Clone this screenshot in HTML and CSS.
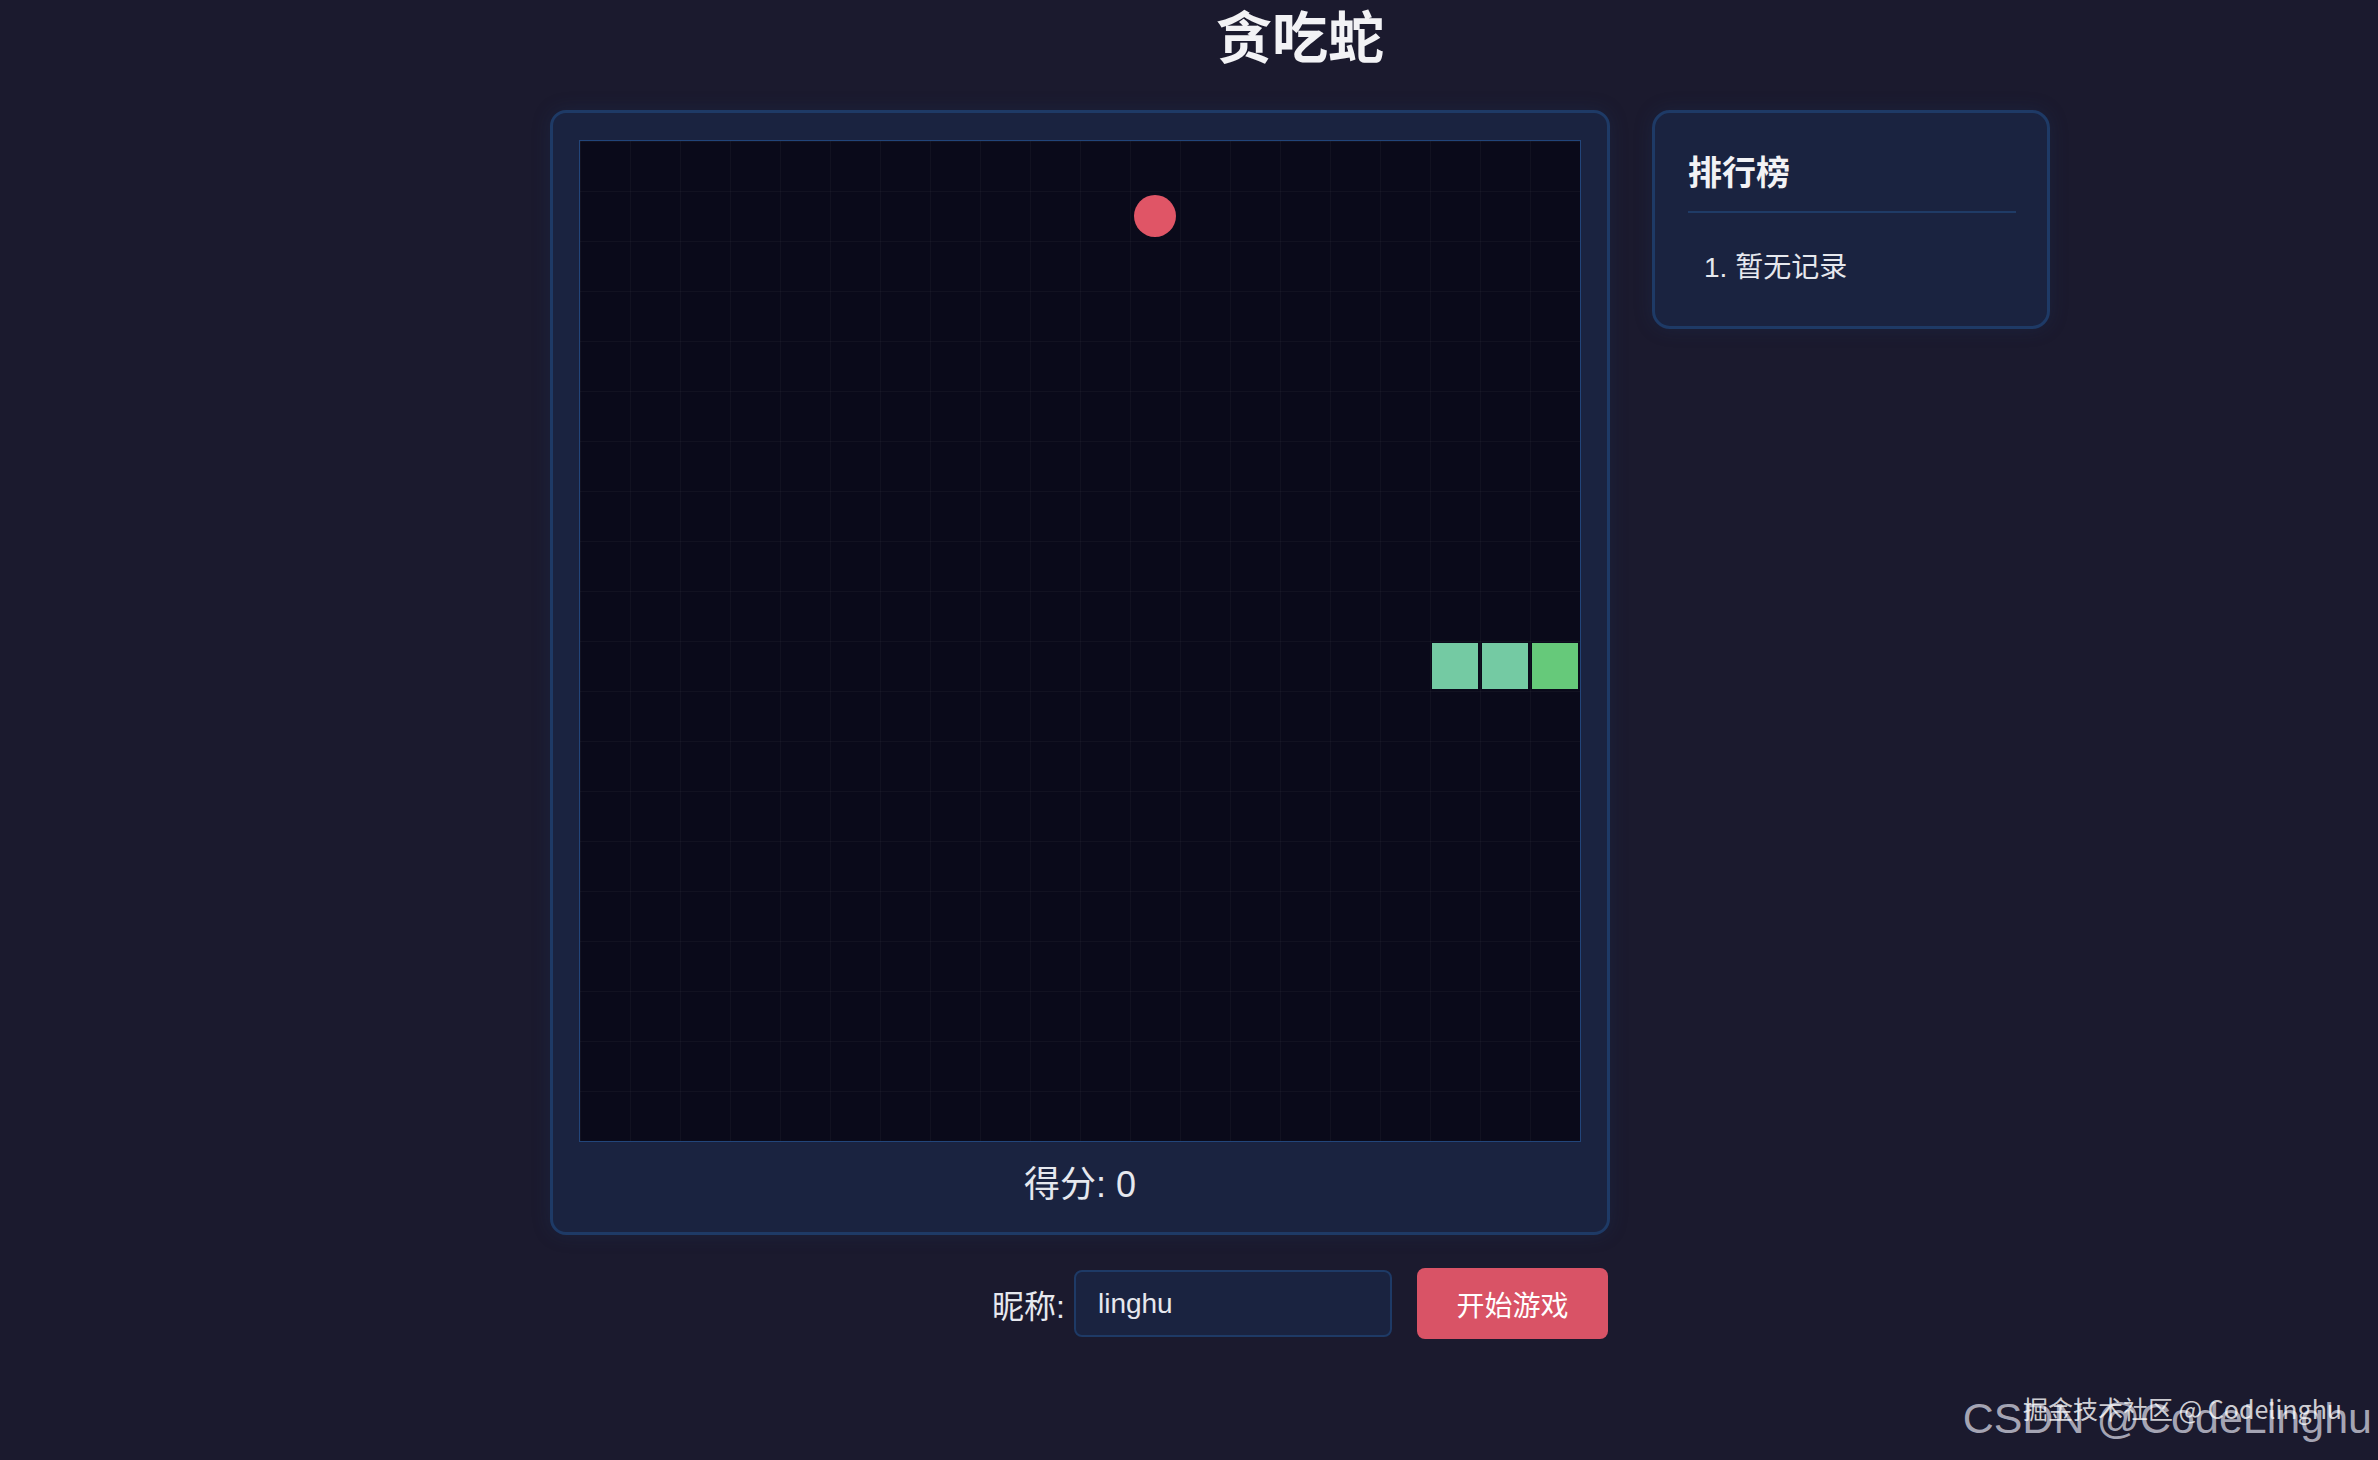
FILE: index.html
```html
<!DOCTYPE html>
<html lang="zh-CN">
<head>
  <meta charset="UTF-8">
  <title>贪吃蛇</title>
  <link rel="stylesheet" href="styles.css">
</head>
<body>

  <div class="wrap">
    <h1 class="title">贪吃蛇</h1>

    <div class="main">
      <!-- game panel -->
      <div class="game-panel">
        <div class="board">
          <div class="food" style="grid-area: 2 / 12"></div>
          <div class="seg" style="grid-area: 11 / 18"></div>
          <div class="seg" style="grid-area: 11 / 19"></div>
          <div class="seg head" style="grid-area: 11 / 20"></div>
        </div>
        <div class="score">得分: 0</div>
      </div>

      <!-- leaderboard -->
      <div class="rank-panel">
        <h2 class="rank-title">排行榜</h2>
        <ul class="rank-list">
          <li>1. 暂无记录</li>
        </ul>
      </div>
    </div>

    <div class="controls">
      <label for="nick">昵称:</label>
      <input id="nick" type="text" value="linghu">
      <button id="start-btn">开始游戏</button>
    </div>
  </div>

  <div class="mark">
    <span class="mark-big">CSDN @CodeLinghu</span>
    <span class="mark-small">掘金技术社区 @ Codelinghu</span>
  </div>

</body>
</html>
```

FILE: styles.css
```css
/* reset & basic */
* { box-sizing: border-box; margin: 0; padding: 0; }
html, body { height: 100%; }
body {
  font-family: "Liberation Sans", "Noto Sans CJK SC", sans-serif;
  background: #1b1a2e;
  color: #e6e8ee;
  overflow: hidden;
  position: relative;
}

.wrap {
  width: 1500px;
  margin-left: 550px;
}

.title {
  font-size: 56px;
  font-weight: 700;
  line-height: 78px;
  text-align: center;
  color: #f2f2f5;
  margin-bottom: 32px;
}

/* two panels side by side */
.main {
  display: flex;
  align-items: flex-start;
  gap: 42px;
}

.game-panel {
  width: 1060px;
  background: #1a2340;
  border: 3px solid #1e3a66;
  border-radius: 16px;
  padding: 27px 26px 22px;
  box-shadow: 0 0 18px rgba(30, 58, 102, 0.25);
}

.board {
  display: grid;
  grid-template-columns: repeat(20, 50px);
  grid-template-rows: repeat(20, 50px);
  width: 1002px;
  height: 1002px;
  border: 1px solid #22457a;
  background-color: #0a0a1a;
  background-image:
    linear-gradient(to right, rgba(255,255,255,0.03) 1px, transparent 1px),
    linear-gradient(to bottom, rgba(255,255,255,0.03) 1px, transparent 1px);
  background-size: 50px 50px;
}

.seg {
  margin: 2px;
  background: #74caa3;
}
.seg.head { background: #66c97a; }

.food {
  width: 42px;
  height: 42px;
  border-radius: 50%;
  background: #e05566;
  place-self: center;
}

.score {
  margin-top: 18px;
  font-size: 36px;
  line-height: 50px;
  text-align: center;
}

/* leaderboard */
.rank-panel {
  width: 398px;
  background: #1a2340;
  border: 3px solid #1e3a66;
  border-radius: 18px;
  padding: 36px 31px 38px 33px;
  box-shadow: 0 0 18px rgba(30, 58, 102, 0.25);
}
.rank-title {
  font-size: 34px;
  font-weight: 700;
  line-height: 48px;
  padding-bottom: 14px;
  border-bottom: 2px solid #1f3b66;
  color: #f2f2f5;
}
.rank-list {
  list-style: none;
  margin-top: 35px;
  padding-left: 16px;
  font-size: 28px;
  line-height: 40px;
}

/* nickname + start */
.controls {
  display: flex;
  justify-content: center;
  align-items: center;
  margin-top: 33px;
}
.controls label {
  font-size: 32px;
  margin-right: 9px;
}
.controls input {
  width: 318px;
  height: 67px;
  background: #1a2340;
  border: 2px solid #1e3a66;
  border-radius: 8px;
  padding: 0 22px;
  font-family: inherit;
  font-size: 28px;
  color: #e6e8ee;
  outline: none;
}
#start-btn {
  margin-left: 25px;
  width: 191px;
  height: 71px;
  border: none;
  border-radius: 8px;
  background: #d95366;
  color: #fff;
  font-family: inherit;
  font-size: 28px;
  cursor: pointer;
}

/* screenshot watermark */
.mark {
  position: absolute;
  right: 6px;
  bottom: 16px;
}
.mark-big {
  display: block;
  font-size: 43px;
  color: rgba(190, 190, 204, 0.85);
  line-height: 52px;
}
.mark-small {
  position: absolute;
  right: 30px;
  top: -2px;
  font-family: "Noto Sans CJK SC", sans-serif;
  font-size: 25px;
  color: rgba(255, 255, 255, 0.8);
  white-space: nowrap;
}
```
